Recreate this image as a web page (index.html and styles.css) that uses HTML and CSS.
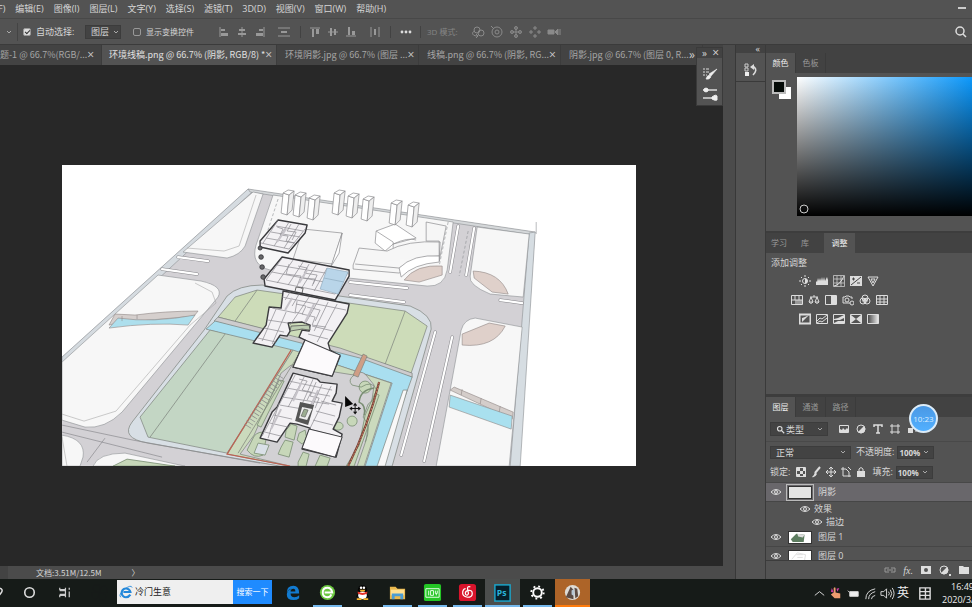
FILE: index.html
```html
<!doctype html>
<html lang="zh-CN">
<head>
<meta charset="UTF-8">
<title>环境线稿.png</title>
<link rel="stylesheet" href="styles.css">
</head>
<body>
<!-- 菜单栏 -->
<nav class="menubar">
  <button>F)</button><button>编辑(E)</button><button>图像(I)</button><button>图层(L)</button><button>文字(Y)</button><button>选择(S)</button><button>滤镜(T)</button><button>3D(D)</button><button>视图(V)</button><button>窗口(W)</button><button>帮助(H)</button>
  <button class="minimize" aria-label="最小化"><svg width="10" height="10" viewBox="0 0 10 10"><path d="M1 3h8v2H1z" fill="#ccc"/></svg></button>
</nav>

<!-- 选项栏 -->
<div class="options">
  <div class="tool"><svg class="chev" viewBox="0 0 8 8"><path d="M2 3l2 2 2-2"/></svg></div>
  <label class="auto"><input type="checkbox" checked>自动选择:</label>
  <span class="drop pick"><select aria-label="自动选择"><option>图层</option></select><svg class="chev" viewBox="0 0 8 8"><path d="M2 3l2 2 2-2"/></svg></span>
  <label class="transform"><input type="checkbox">显示变换控件</label>
  <div class="aligns">
    <button aria-label="左对齐"><svg viewBox="0 0 12 12"><path d="M2 1v10"/><path class="f" d="M3 3h4v2H3zM3 7h7v3H3z"/></svg></button>
    <button aria-label="水平居中"><svg viewBox="0 0 12 12"><path d="M6 1v10"/><path class="f" d="M3 3h6v2H3zM2 7h8v2H2z"/></svg></button>
    <button aria-label="右对齐"><svg viewBox="0 0 12 12"><path d="M10 1v10"/><path class="f" d="M5 3h4v2H5zM2 7h7v3H2z"/></svg></button>
  </div>
  <button class="spread" aria-label="分布"><svg viewBox="0 0 12 12"><path d="M0 2h12M0 10h12"/><path class="f" d="M3 5h6v2H3z"/></svg></button>
  <div class="aligns line">
    <button aria-label="顶对齐"><svg viewBox="0 0 12 12"><path d="M1 2h10"/><path class="f" d="M3 3h2v8H3zM7 3h3v5H7z"/></svg></button>
    <button aria-label="垂直居中"><svg viewBox="0 0 12 12"><path d="M1 6h10"/><path class="f" d="M3 2h2v8H3zM7 3h2v6H7z"/></svg></button>
    <button aria-label="底对齐"><svg viewBox="0 0 12 12"><path d="M1 10h10"/><path class="f" d="M3 1h2v8H3zM7 5h3v4H7z"/></svg></button>
  </div>
  <button class="spread2" aria-label="水平分布"><svg viewBox="0 0 12 12"><path d="M2 1v10M10 1v10"/><path class="f" d="M5 3h2v6H5z"/></svg></button>
  <button class="more line" aria-label="更多"><svg viewBox="0 0 12 12"><circle cx="2" cy="6" r="1.4"/><circle cx="6" cy="6" r="1.4"/><circle cx="10" cy="6" r="1.4"/></svg></button>
  <span class="mode line">3D 模式:</span>
  <div class="modes">
    <svg viewBox="0 0 14 14"><circle cx="6" cy="5" r="3"/><circle cx="10" cy="8" r="3"/><path d="M4 6C0 7 1 11 6 11M5 9l2 2-2 2"/></svg>
    <svg viewBox="0 0 14 14"><circle cx="7" cy="7" r="5"/><circle cx="7" cy="7" r="2"/><path d="M1 1l3 3"/></svg>
    <svg viewBox="0 0 14 14"><path d="M7 2v10M2 7h10"/><circle cx="7" cy="3" r="1.500"/><circle cx="7" cy="11" r="1.500"/><circle cx="3" cy="7" r="1.500"/><circle cx="11" cy="7" r="1.500"/></svg>
    <svg viewBox="0 0 14 14"><path d="M7 1v4M7 9v4M1 7h4M9 7h4M5 3h4M5 11h4M3 5v4M11 5v4"/></svg>
    <svg viewBox="0 0 14 14"><path d="M1 5h6v4H1zM8 7l3-3v6z" fill="#8a8a8a"/><path d="M13 4v6"/></svg>
  </div>
  <button class="search" aria-label="搜索"><svg viewBox="0 0 12 12"><circle cx="5" cy="5" r="4"/><path d="M8 8l3 3"/></svg></button>
</div>

<main class="work">
  <section class="doc">
    <div class="tabs">
      <div class="tab first"><button>题-1 @ 66.7%(RGB/...</button><button class="x" aria-label="关闭">×</button></div>
      <div class="tab on"><button>环境线稿.png @ 66.7% (阴影, RGB/8) *</button><button class="x" aria-label="关闭">×</button></div>
      <div class="tab"><button>环境阴影.jpg @ 66.7% (图层 ...</button><button class="x" aria-label="关闭">×</button></div>
      <div class="tab"><button>线稿.png @ 66.7% (阴影, RG...</button><button class="x" aria-label="关闭">×</button></div>
      <div class="tab"><button>阴影.jpg @ 66.7% (图层 0, R...</button><button class="x" aria-label="更多标签">»</button></div>
    </div>
    <div class="canvas">
      <svg class="art" viewBox="62 165 574 301">
        <rect x="62" y="165" width="574" height="301" fill="#fff"/>
        <!-- 道路底 -->
        <path d="M62 357L248 189 535 232 519 466H62z" fill="#d3d1d5"/>
        <g stroke="#8b8e92" stroke-width=".6">
          <path d="M62 357L248 189l4 3L62 368z" fill="#d5dbe0"/>
          <path d="M248 189l287 43-2 3-283-43z" fill="#d5d8da"/>
          <path d="M529 233l6-1-15 234h-10z" fill="#d6dde2"/>
          <path d="M536 222v12" fill="none"/>
          <!-- 地块 -->
          <g fill="#f7f7f7">
            <path d="M253 192l10 2-18 52Q240 255 227 258L183 252z"/>
            <path d="M273 195l180 27-6 48Q444 287 427 286L270 270Q250 265 256 245z"/>
            <path d="M477 227l52 7-6 63-33-3Q468 285 470 276z"/>
            <path d="M158 275l43 6Q224 286 218 297L122 412Q105 429 85 427L62 420V362z"/>
            <path d="M436 466l25-136Q464 319 475 318l47 9-13 139z"/>
            <path d="M62 435Q86 439 83 457l-3 9H62z"/>
            <path d="M93 466Q98 453 125 453l60 13z"/>
          </g>
          <path d="M256 195L239 246 224 251 187 248M195 283l17 9 4 11-26 22-74 86-32 10-22-7M62 437l5 29" fill="none" stroke="#aaa"/>
          <path d="M278 199l-17 52M448 222l-9 44M468 231l-9 45" fill="none" stroke-dasharray="3 2"/>
        </g>
        <!-- 车道线 -->
        <g stroke="#86868a" stroke-width="3.2" stroke-linecap="round">
          <path d="M178 257l30 4M162 269l35 5M350 282l57 6M350 295l54 7M458 226l-8 46M474 228l-8 47M500 300l22 3M435 332l-34 123M452 337l-28 124"/>
        </g>
        <g stroke="#fff" stroke-width="2.2" stroke-linecap="round">
          <path d="M178 257l30 4M162 269l35 5M350 282l57 6M350 295l54 7M458 226l-8 46M474 228l-8 47M500 300l22 3M435 332l-34 123M452 337l-28 124"/>
        </g>
        <!-- 褐色铺地与水面 -->
        <g stroke="#8e8784" stroke-width=".6">
          <path d="M404 280Q416 264 442 266v9l-23 7z" fill="#dfd0ca"/>
          <path d="M473 271Q500 272 508 294l-16-2-18-14z" fill="#dfd0ca"/>
          <path d="M462 334l27-11 16 3Q494 348 462 345z" fill="#dfd0ca"/>
          <path d="M115 314l20 1q30-4 63-4l-4 5-77 7-8 2z" fill="#d5cfcd"/>
          <path d="M118 318q35 5 77-3l-7 10q-35-3-79 3z" fill="#addfed"/>
          <path d="M450 390l4-3 59 25-1 7z" fill="#d4cdca"/>
          <path d="M450 395l62 21-1 13-62-22z" fill="#a9e0ef"/>
          <path d="M462 389l-1 6M481 398l-1 6M500 406l-1 6M122 316v5M137 315v4"/>
        </g>
        <!-- 中央绿地 -->
        <g stroke="#7b817b" stroke-width=".7">
          <path d="M204 330l23-34Q238 285 262 285l148 21Q433 315 431 329l-39 137H280L148 443Q120 438 132 422z" fill="#d8dfe5"/>
          <path d="M218 317l17-20 22-7 148 21 22 15-16 47-71-24z" fill="#cddcb9"/>
          <path d="M218 317l122 31 72 25v4L214 321z" fill="#cdccce"/>
          <path d="M257 290l-22 31M405 311l-20 53" fill="none"/>
          <path d="M215 321l145 37 52 19-8 22-26 67h-13l27-83-55-18-131-36z" fill="#a9dff0"/>
          <path d="M403 390h4l-22 76h-8z" fill="#f8f8f8"/>
          <path d="M210 330l83 20-66 103-79-16-8-20z" fill="#c3d6c4"/>
          <path d="M225 334l-75 103" fill="none"/>
          <path d="M293 350l98 33-27 83H290l-63-12z" fill="#cbdabd"/>
          <path d="M291 365l63 10q6-6 12 0l8 10-8 55-9 26H290l-50-12 14-19 27-62z" fill="#d2d1d4"/>
          <path d="M363 354l4 2-9 21-5-2z" fill="#cf9e86"/>
        </g>
        <!-- 园区绿化 -->
        <g stroke="#798d72" stroke-width=".8" fill="#c7d7b9">
          <path d="M279 380l5 1-23 46-4-2zM247 450l7-14q5-6 13-3l-4 22q-9 4-16-5zM281 447l4-7 8 2-4 15-11-3zM298 462l5-10 6 2-3 12h-8zM315 466l5-11 10 3-3 8zM286 430l5-6 6 2-3 14-9-3zM299 433l6-3 2 10-5 4-5-4z"/>
          <path d="M359 445l6-30 10-22 4 2-25 71h-8z"/>
          <ellipse cx="338" cy="426" rx="5" ry="4"/><circle cx="352" cy="421" r="5"/><circle cx="365" cy="387" r="6"/>
          <path d="M354 375q-7 5-2 10l9 2q11-7 15 2 1 9-8 15l-5 13q9 10 2 25" fill="none"/>
          <path d="M374 388q-14 2-15 14 7 3 5 13" fill="none" stroke-width="1.5"/>
          <path d="M258 443l11 2-4 10-11-2z" fill="#d9e0e7"/>
          <path d="M113 466l14-7 48 7z"/>
        </g>
        <g fill="none">
          <path d="M291 350l-64 104 63 12" stroke="#bd6252" stroke-width="1.2"/>
          <path d="M300 352l-62 101" stroke="#7b8075" stroke-width=".7"/>
          <path d="M379 382q-11 44-31 84" stroke="#734438" stroke-width="2.2"/>
          <path d="M379 382q-11 44-31 84" stroke="#c57660" stroke-width="1" stroke-dasharray="2 1"/>
          <path d="M280 376l-33 51" stroke="#8b8c8c" stroke-width="8" stroke-dasharray=".7 3"/>
          <path d="M62 425l71 15 127 23M62 432l100 25M105 438l-18 24" stroke="#8b8b8f" stroke-width=".7"/>
        </g>
        <!-- 背景体块 -->
        <g fill="#fff" stroke="#8d8d8f" stroke-width=".7">
          <path d="M303 229l39 4-10 31-39-5z" fill="#f5f5f5"/><path d="M342 233l-3 20-9 15 2-5z"/>
          <path d="M376 231l19-7 21 14-23 6-8 7-10-8zM376 231l17 11v8M393 244q15-7 23-4"/>
          <path d="M426 222l20 4-7 35v-20h-13zM353 265l6-17 28 3q20-11 53-9l-1 19q-28 0-40 12l-46-4zM355 264l44 4q15-13 40-12" fill="#f6f6f6"/>
          <path d="M399 268q14-14 40-12v6q-26 2-38 15z"/>
          <g id="tower"><path d="M283 193l6 2-2 20-6-2z"/><path d="M283 193l5-3 6 1-5 4z"/><path d="M289 195l5-4-2 19-5 5z" fill="#eee"/></g>
          <use href="#tower" x="12" y="2"/><use href="#tower" x="26" y="5"/><use href="#tower" x="51"/><use href="#tower" x="65" y="3"/><use href="#tower" x="80" y="6"/><use href="#tower" x="108" y="10"/><use href="#tower" x="125" y="12"/>
        </g>
        <!-- 主体建筑 -->
        <g fill="#f3f1f4" stroke="#3b3b3e" stroke-width="1.4" stroke-linejoin="round">
          <path d="M278 220l29 5-2 8-17 20-28-6v-6z"/>
          <path d="M282 257l67 13v6l-14 24-70-14-1-7z"/>
          <path d="M283 291l66 13-2 9-19 30 2 7 10 6-8 20-39-9 12-27-6-3 3-7 7 1 1-6-8-3-14 1 2 8-3 5-7-1-8 12-19-4 13-18 3-18 12 1z"/>
          <path d="M293 373l24 6 3 3 17 2-1 9-4 8 10 2-3 14-6 12 9 5-6 23-34-8 8-21-13-4-7-1-13 19-17-4 12-26 5-5z"/>
        </g>
        <g fill="none" stroke="#8b8a8f" stroke-width=".7">
          <path d="M261 243l28 6 16-20M266 238l28 5M271 232l29 5M276 226l27 5M278 220l-15 23M289 222l-15 24M299 224l-15 24M277 227l6 2-3 6 8 1-2 5 9 2M291 224l-4 7 9 1-4 8"/>
          <path d="M266 280l69 14 13-22M282 258l-16 22M293 260l-16 23M303 262l-15 23M316 265l-15 24M327 268l-13 23M272 272l63 12M277 265l60 10M289 264l-3 10 15 2-4 10M309 264l-5 9 13 2-4 9M298 266l9 2-4 10 12 1-3 7"/>
          <path d="M282 297l64 13M290 292l-5 8M299 294l-7 12M309 297l-19 28M319 299l-14 25M328 302l-14 29M337 304l-20 38M272 308l24 5M268 320l20 3M264 328l20 4M258 338l18 4M276 309l-14 32M286 312l-14 32M296 304l10 2-4 8 13 3-3 8 14 2M312 326l21 5M308 334l20 5M307 307l13 3-5 11M297 301l-2 11 8 2"/>
          <path d="M289 381l43 9M287 388l43 8M283 397l46 7M280 405l23 4M274 415l18 4M270 423l18 4M265 432l16 4M295 375l-33 61M304 377l-16 30M313 379l-15 34M322 384l-15 34M331 386l-21 42M299 379l8 2-5 9 9 2-4 8M316 382l-6 14 9 2-4 10M321 401l15 4M316 411l19 5M313 420l20 5M309 429l24 6M279 403l-11 35"/>
        </g>
        <g fill="none" stroke="#c6c3c9" stroke-width="2"><path d="M286 229l-9 13M307 270l-8 13M292 298l-7 12M314 304l-9 18M301 383l-8 18M318 390l-9 19M281 409l-10 20"/></g>
        <path d="M327 268l21 4-10 22-18-5z" fill="#b9d5e9" stroke="#88a4b8" stroke-width=".6"/>
        <path d="M324 278l20 4" stroke="#88a4b8" stroke-width=".6"/>
        <path d="M305 340l35 15-8 21-39-9zM309 429l33 8-7 20-33-9z" fill="#fcfafc" stroke="#3f3f42"/>
        <path d="M300 402l14 3-6 20-13-4z" fill="#555"/><path d="M302 407l10 2-5 11-8-2z" fill="#eee"/><path d="M304 409l4 1-3 7-4-1z" fill="#9cad91" stroke="#555" stroke-width=".6"/>
        <path d="M291 326l18-1 1 5-8-1-12 2z" fill="#bdcdb1" stroke="#555" stroke-width=".8"/>
        <path d="M295 291l1-4 7 1-1 5" fill="none" stroke="#444" stroke-width=".8"/>
        <g fill="#68686a" stroke="#303033" stroke-width=".8"><circle cx="260" cy="248" r="2"/><circle cx="261" cy="257" r="2.3"/><circle cx="262" cy="267" r="2.3"/><circle cx="263" cy="277" r="2.3"/></g>
        <!-- 移动工具光标 -->
        <path d="M345 396l8 8-8 3z" fill="#050505"/>
        <path d="M355 404v9M350.500 408.500h9M353.500 405.500l1.500-2 1.500 2M353.500 411.500l1.500 2 1.500-2M352 407l-2 1.500 2 1.500M358 407l2 1.500-2 1.500" fill="none" stroke="#111" stroke-width="1"/>
      </svg>
    </div>
    <div class="status"><span class="size">文档:3.51M/12.5M</span><span>〉</span></div>
    <!-- 浮动小面板 -->
    <aside class="float">
      <header><span>»</span><button aria-label="关闭">×</button></header>
      <button aria-label="画笔设置"><svg viewBox="0 0 16 16"><path d="M1 3h2M4 3h3M1 6h2M4 6h3M1 9h2M4 9h1" stroke="#ddd"/><path d="M15 3l-6 7-2-2zM4 13q1-4 4-4l1 2q-2 3-5 2z" fill="#eee" stroke="#eee" stroke-width=".6"/></svg></button>
      <button aria-label="画笔"><svg viewBox="0 0 16 16"><path d="M1 4h14M1 12h10" stroke="#ddd" stroke-width="1.500"/><path d="M2 3q2-2 4 0v2q-2 2-4 0zM10 11q4-3 5-1v4q-2 1-5-1z" fill="#eee" stroke="#eee"/></svg></button>
    </aside>
  </section>

  <div class="dock">
    <header>«</header>
    <button aria-label="历史记录"><svg viewBox="0 0 16 16"><path d="M2 2h3v3H2zM2 6h3v3H2z" fill="none" stroke="#ccc"/><path d="M2 10h4v4H2z" fill="#eee"/><path d="M9 5h2q4 3-1 8" fill="none" stroke="#ddd" stroke-width="1.600"/><path d="M7 5l4-3v6z" fill="#ddd"/></svg></button>
  </div>

  <aside class="panels">
    <div class="strip"></div>
    <section class="panel">
      <div class="ptabs"><button class="on">颜色</button><button>色板</button></div>
      <div class="color">
        <div class="swatch"><i class="back"></i><i class="fore"></i></div>
        <div class="field"><svg viewBox="0 0 12 12"><circle cx="6" cy="6" r="4" fill="none" stroke="#ccc"/></svg></div>
      </div>
    </section>
    <section class="panel adjust">
      <div class="ptabs"><button>学习</button><button>库</button><button class="on">调整</button></div>
      <h2>添加调整</h2>
      <div class="icons">
        <svg viewBox="0 0 12 12"><circle cx="6" cy="6" r="2.500"/><path class="f" d="M6 3.500a2.500 2.500 0 010 5z"/><path d="M6 0v2M6 10v2M0 6h2M10 6h2M2 2l1 1M9 9l1 1M2 10l1-1M9 3l1-1"/></svg>
        <svg viewBox="0 0 12 12"><path class="f" d="M0 10V6l1 1 1-4 1 3 1-3 1 3 1-4 1 4 1-4 1 4 2-4 1 3v5z"/></svg>
        <svg viewBox="0 0 12 12"><path d="M.5.500h11v11H.5zM4 1v10M8 1v10M1 4h10M1 8h10" opacity=".7"/><path d="M1 11Q7 10 11 1"/></svg>
        <svg viewBox="0 0 12 12"><path class="f" d="M0 1h12v10H0z"/><path d="M11 2L1 10M2 4h3M3.500 2.500v3M7 8h3" stroke="#444"/></svg>
        <svg viewBox="0 0 12 12"><path d="M1 2h10L6 11z"/><path d="M4 4h4L6 8z"/></svg>
      </div>
      <div class="icons">
        <svg viewBox="0 0 12 12"><path d="M.5 1.500h11v9H.5zM1 6h10M4 2v4M8 2v4"/><path class="f" d="M4 6h7v4H4z" opacity=".5"/></svg>
        <svg viewBox="0 0 12 12"><path d="M6 1v2M2 3h8M3 3L1 8h4zM9 3L7 8h4zM1 8q2 3 4 0M7 8q2 3 4 0"/></svg>
        <svg viewBox="0 0 12 12"><path d="M.5 1.500h11v9H.5z"/><path class="f" d="M6 2h5v8H6z"/></svg>
        <svg viewBox="0 0 12 12"><path d="M8 9H1V3h2l1-1h3l1 1h2v2"/><circle cx="5" cy="6" r="2"/><circle cx="10" cy="9" r="2"/></svg>
        <svg viewBox="0 0 12 12"><circle cx="6" cy="4" r="3"/><circle cx="4" cy="7" r="3"/><circle cx="8" cy="7" r="3"/><path class="f" d="M4 4h4l1 3-3 3-3-3z" opacity=".7"/></svg>
        <svg viewBox="0 0 12 12"><path d="M.5 1.500h11v9H.5zM4 2v8M8 2v8M1 5h10M1 8h10"/></svg>
      </div>
      <div class="icons">
        <svg viewBox="0 0 12 12"><path d="M.5 1.500h11v9H.5z" stroke-width="2"/><path class="f" d="M10 2L3 9V5l3-1z"/></svg>
        <svg viewBox="0 0 12 12"><path d="M.5 1.500h11v9H.5zM1 8l3-3 2 1 5-4M1 10l3-2 2 1 5-4"/></svg>
        <svg viewBox="0 0 12 12"><path d="M.5 1.500h11v9H.5z"/><path class="f" d="M1 6l4-1 6-3v3L7 7H1zM1 10l4-2h6v2z"/></svg>
        <svg viewBox="0 0 12 12"><path d="M.5 1.500h11v9H.5z"/><path class="f" d="M1 2l5 4 5-4v8L6 6l-5 4z"/></svg>
        <svg viewBox="0 0 12 12"><defs><linearGradient id="fade"><stop stop-color="#444"/><stop offset="1" stop-color="#eee"/></linearGradient></defs><path d="M.5 1.500h11v9H.5z" fill="url(#fade)"/></svg>
      </div>
    </section>
    <section class="panel layers">
      <div class="ptabs"><button class="on">图层</button><button>通道</button><button>路径</button></div>
      <div class="row filter">
        <span class="drop kind"><svg class="mag" viewBox="0 0 12 12"><circle cx="5" cy="5" r="3"/><path d="M7 7l4 4"/></svg><select aria-label="筛选"><option>类型</option></select><svg class="chev" viewBox="0 0 8 8"><path d="M2 3l2 2 2-2"/></svg></span>
        <span class="icons">
          <svg viewBox="0 0 12 12"><path d="M1.500 2.500h9v7h-9z"/><path class="f" d="M2 9V6l2 1 1-2 2 2 2-2 1 1v3z"/></svg>
          <svg viewBox="0 0 12 12"><circle cx="6" cy="6" r="4"/><path class="f" d="M9 3a4 4 0 01-6 6z"/></svg>
          <svg viewBox="0 0 12 12"><path d="M2 4V2h8v2M6 2v8M4 10h4" stroke-width="1.500"/></svg>
          <svg viewBox="0 0 12 12"><path d="M3 1v10M9 1v10M1 3h10M1 9h10"/></svg>
          <svg viewBox="0 0 12 12"><path d="M5 2h5v7"/><path class="f" d="M2 5h5v5H2z"/></svg>
        </span>
      </div>
      <div class="row">
        <span class="drop blend"><select aria-label="混合模式"><option>正常</option></select><svg class="chev" viewBox="0 0 8 8"><path d="M2 3l2 2 2-2"/></svg></span>
        <label for="op">不透明度:</label>
        <span class="drop num"><input id="op" type="text" value="100%"><svg class="chev" viewBox="0 0 8 8"><path d="M2 3l2 2 2-2"/></svg></span>
      </div>
      <div class="row">
        <span>锁定:</span>
        <span class="locks">
          <svg viewBox="0 0 12 12"><path d="M1.500 1.500h9v9h-9z"/><path class="f" d="M2 2h3v3H2zM8 2h3v3H8zM5 5h3v3H5zM2 8h3v3H2zM8 8h3v3H8z"/></svg>
          <svg viewBox="0 0 12 12"><path d="M10 1L5 7" stroke-width="2"/><path class="f" d="M5 6l2 2q-2 4-5 3 2-1 3-5z"/></svg>
          <svg viewBox="0 0 12 12"><path d="M6 1v10M1 6h10M4 3l2-2 2 2M4 9l2 2 2-2M3 4L1 6l2 2M9 4l2 2-2 2"/></svg>
          <svg viewBox="0 0 12 12"><path d="M3 1v9h8M1 3h5l3 3v5M8 1l3 3"/></svg>
          <svg viewBox="0 0 12 12"><path d="M4 5V3q2-3 4 0v2"/><path class="f" d="M2 5h8v6H2z"/></svg>
        </span>
        <label for="fill">填充:</label>
        <span class="drop num"><input id="fill" type="text" value="100%"><svg class="chev" viewBox="0 0 8 8"><path d="M2 3l2 2 2-2"/></svg></span>
      </div>
      <div class="list">
        <div class="layer sel"><svg class="eye" viewBox="0 0 12 12"><path d="M1 6q5-5 10 0-5 5-10 0z"/><circle cx="6" cy="6" r="1.500"/></svg><i class="thumb check"></i>阴影</div>
        <div class="fx"><svg class="eye" viewBox="0 0 12 12"><path d="M1 6q5-5 10 0-5 5-10 0z"/><circle cx="6" cy="6" r="1.500"/></svg>效果</div>
        <div class="fx sub"><svg class="eye" viewBox="0 0 12 12"><path d="M1 6q5-5 10 0-5 5-10 0z"/><circle cx="6" cy="6" r="1.500"/></svg>描边</div>
        <div class="layer"><svg class="eye" viewBox="0 0 12 12"><path d="M1 6q5-5 10 0-5 5-10 0z"/><circle cx="6" cy="6" r="1.500"/></svg><i class="thumb"><svg viewBox="0 0 22 12"><path d="M1 8l6-6 9 1-1 8H3z" fill="#5d7d60"/><path d="M8 2l8 1-2 3-5-1z" fill="#ddd"/></svg></i>图层 1</div>
        <div class="layer"><svg class="eye" viewBox="0 0 12 12"><path d="M1 6q5-5 10 0-5 5-10 0z"/><circle cx="6" cy="6" r="1.500"/></svg><i class="thumb"><svg viewBox="0 0 22 12"><path d="M2 9l6-7 9 2-1 6M7 4h7M8 7h6" fill="none" stroke="#ddd"/></svg></i>图层 0</div>
      </div>
      <footer class="foot">
        <button aria-label="链接图层"><svg viewBox="0 0 12 12" opacity=".5"><path d="M5 4H1v4h4M7 4h4v4H7M3 6h6"/></svg></button>
        <button aria-label="图层样式" class="fxb">fx.</button>
        <button aria-label="蒙版"><svg viewBox="0 0 12 12"><path class="f" fill-rule="evenodd" d="M1 2h10v8H1zM6 4a2 2 0 100 4 2 2 0 000-4z"/></svg></button>
        <button aria-label="调整图层"><svg viewBox="0 0 12 12"><circle cx="5" cy="6" r="4"/><path class="f" d="M8 3a4 4 0 01-6 6zM10 10h2v2h-2z"/></svg></button>
        <button aria-label="新建组"><svg viewBox="0 0 12 12"><path class="f" d="M1 2h4l1 1h5v7H1z"/></svg></button>
      </footer>
      <div class="bubble">10:23</div>
    </section>
  </aside>
</main>

<!-- 任务栏 -->
<footer class="taskbar">
  <div class="start"><svg viewBox="0 0 12 20"><path d="M-1 5q5 1 2 5l-3 4" fill="none" stroke="#ddd" stroke-width="1.500"/></svg></div>
  <button class="app" aria-label="Cortana"><svg viewBox="0 0 20 20"><circle cx="10" cy="10" r="5" fill="none" stroke="#ddd" stroke-width="1.700"/></svg></button>
  <button class="app" aria-label="任务视图"><svg viewBox="0 0 20 20"><path d="M5 5v2h6V5M5 15v-2h6v2M5 8h6v4H5M15 5v2M15 9v6" fill="none" stroke="#ccc" stroke-width="1.300"/></svg></button>
  <button class="app" aria-label="风车"><svg viewBox="0 0 20 20" fill="#eee" stroke="#161b19" stroke-width=".8"><g id="petal"><path d="M10 10V2q-6-1-7 3 0 4 7 5z"/></g><use href="#petal" transform="rotate(90 10 10)"/><use href="#petal" transform="rotate(180 10 10)"/><use href="#petal" transform="rotate(270 10 10)"/></svg></button>
  <form class="seek">
    <svg viewBox="0 0 16 16"><path d="M13 11q-2 3-5 3a5 5 0 115-6H5" fill="none" stroke="#2488da" stroke-width="2.500"/><path d="M2 14Q-1 11 6 5q8-6 9-2" fill="none" stroke="#2488da"/></svg>
    <input type="text" value="冷门生意" aria-label="搜索词"><button type="button">搜索一下</button>
  </form>
  <div class="apps">
    <button class="app" aria-label="Edge"><svg viewBox="0 0 20 20"><path d="M4 10q0-7 7-7 6 0 6 8H8q0 4 4 4 3 0 5-2v3q-2 2-6 2-7 0-7-6 0-4 5-6-3 0-5 4zM8 9h5q0-3-2-3-3 0-3 3z" fill="#127bd0" fill-rule="evenodd"/></svg></button>
    <button class="app run" aria-label="浏览器"><svg viewBox="0 0 20 20"><circle cx="10" cy="10" r="8" fill="#6bc73f"/><path d="M14 12q-1 3-4 3-5 0-5-5t5-5q4 0 5 5H7" fill="none" stroke="#fff" stroke-width="2"/></svg></button>
    <button class="app" aria-label="QQ"><svg viewBox="0 0 20 20"><ellipse cx="10" cy="8" rx="5" ry="6" fill="#050505"/><path d="M6 9l-3 6 4-2M14 9l3 6-4-2" fill="#050505"/><ellipse cx="10" cy="13" rx="4.500" ry="4" fill="#fff"/><path d="M5 9q5 3 10 0v2q-5 3-10 0z" fill="#e63126"/><circle cx="8.500" cy="5" r="1.300" fill="#fff"/><circle cx="11.500" cy="5" r="1.300" fill="#fff"/><path d="M7 7h6l-1 2H8zM4 16h5v2H4zM11 16h5v2h-5z" fill="#f6b42c"/></svg></button>
    <button class="app run" aria-label="文件"><svg viewBox="0 0 20 20"><path d="M2 4h6l2 2h8v11H2z" fill="#eab84d"/><path d="M3 7h14v6H3z" fill="#ffe092"/><path d="M4 11h12v6h-3v-3H7v3H4z" fill="#4c9dd3"/></svg></button>
    <button class="app run" aria-label="爱奇艺"><svg viewBox="0 0 20 20"><rect x="1" y="1" width="18" height="18" rx="2" fill="#24c625"/><path d="M3 6h14v9H3zM6 8v5M8 8h3v5H8zM13 8v3h2V8M14 11v2" fill="none" stroke="#eaffea"/></svg></button>
    <button class="app run" aria-label="音乐"><svg viewBox="0 0 20 20"><rect x="1" y="1" width="18" height="18" rx="3" fill="#d9142c"/><path d="M13 4q-3-1-3 2l1 5q-1 3-3 1-1-3 2-4 5-1 5 3 0 4-5 4-6-1-5-6 1-3 3-3" fill="none" stroke="#fff" stroke-width="1.300"/></svg></button>
    <button class="app run now" aria-label="Photoshop"><svg viewBox="0 0 20 20"><rect x="2" y="2" width="16" height="17" fill="#071f2b" stroke="#1ca8cf" stroke-width="1.500"/><text x="4" y="14" class="ps">Ps</text></svg></button>
    <button class="app run" aria-label="设置"><svg viewBox="0 0 20 20"><circle cx="10" cy="10" r="4.500" fill="none" stroke="#fff" stroke-width="2"/><circle cx="10" cy="10" r="6.500" fill="none" stroke="#fff" stroke-width="2" stroke-dasharray="2 3.100"/></svg></button>
    <button class="app run hot" aria-label="头像"><svg viewBox="0 0 20 20"><circle cx="10" cy="10" r="8" fill="#dedbd5"/><path d="M3 15l5-11 3 3v10zM12 5l3 1 1 8-3 2z" fill="#5c4b43"/><path d="M9 8l3-2v8l-3-2z" fill="#b7c7d4"/></svg></button>
  </div>
  <div class="tray">
    <svg viewBox="0 0 16 16"><path d="M3 10l5-4 5 4"/></svg>
    <svg viewBox="0 0 16 16"><path d="M5 7V2q2-2 2 1v4l5 1v5H6l-4-4z" fill="#ef9d70" stroke="none"/><path d="M3 2l2 5-3-1zM8 3l3-1-2 4z" fill="#d13ca4" stroke="none"/></svg>
    <svg viewBox="0 0 16 16"><path d="M4 6h9v5H4zM2 5l2 2" fill="#eee"/></svg>
    <svg viewBox="0 0 16 16"><path d="M3 14Q3 5 13 3M6 14q0-6 7-8M9 14q0-3 4-4"/></svg>
    <svg viewBox="0 0 16 16"><path d="M1 6h3l3-3v10l-3-3H1zM9 6q2 2 0 4M11 4q3 4 0 8M13 2q4 6 0 12"/></svg>
    <span class="ime">英</span>
    <svg viewBox="0 0 16 16" class="grid"><path d="M3 2h11v12H3zM3 6h11M3 10h11M9 2v12" stroke-width="1.500"/></svg>
    <div class="clock"><time>16:49</time><time>2020/3/</time></div>
  </div>
</footer>
</body>
</html>
```

FILE: styles.css
```css
*{box-sizing:border-box;}
body{
	margin:0; height:100vh;
	display:flex; flex-direction:column;
	overflow:hidden;
	background:#535353;
	color:#d6d6d6;
	font:9px/12px "Open Sans","Noto Sans CJK SC",sans-serif;
}
button,input,select{
	margin:0; padding:0; border:0;
	background:none; color:inherit; font:inherit;
	border-radius:0; outline:0;
}
select{appearance:none; width:100%;}
button{white-space:nowrap;}
svg{display:block; flex:none; fill:none;}
.chev{width:8px; height:8px; stroke:#aaa;}

/* 菜单栏 */
.menubar{
	display:flex; align-items:center; gap:10px;
	height:18px; margin-left:-2px;
}
.minimize{margin-left:auto; padding-right:5px;}

/* 选项栏 */
.options{
	display:flex; align-items:center;
	height:27px;
	border-top:1px solid #484848;
	border-bottom:1px solid #3b3b3b;
}
.options svg:not(.chev){width:12px; height:12px; stroke:#999; fill:none;}
.options .aligns .f,.options button .f{fill:#999; stroke:none;}
.tool{width:18px; height:18px; padding:5px; border-right:1px solid #444;}
.options label{display:flex; align-items:center; gap:5px;}
.options input{
	appearance:none; width:8px; height:8px;
	border:1px solid #999; border-radius:2px;
}
.options input:checked{background:#ddd;}
.options input:checked::after{
	content:""; display:block;
	width:2px; height:4px; margin:0 auto;
	border:solid #333; border-width:0 1px 1px 0;
	rotate:45deg;
}
.auto{width:62px; padding-left:5px; white-space:nowrap;}
.drop{
	display:flex; align-items:center;
	height:13px; padding:0 3px 0 5px;
	background:#434343;
	border:1px solid #3c3c3c;
}
.drop select,.drop input{flex:1; min-width:0; height:11px; line-height:11px;}
.pick{width:36px; height:14px; margin-left:5px; padding-right:0;}
.transform{width:85px; margin-left:12px; font-size:8px; white-space:nowrap;}
.aligns{display:flex; gap:6px;}
.spread{margin-left:12px;}
.line{border-left:1px solid #424242;}
.spread + .aligns{margin-left:10px; padding-left:8px;}
.spread2{margin-left:12px;}
.more{margin-left:9px; padding-left:9px;}
.options .more svg{fill:#ddd; stroke:none;}
.mode{margin-left:8px; padding-left:6px; color:#858585; font-size:8px;}
.modes{display:flex; gap:5px; margin-left:13px;}
.options .modes svg{width:14px; height:14px; stroke:#8a8a8a;}
.search{margin-left:auto; padding-right:5px;}
.options .search svg{stroke:#ddd; stroke-width:1.5;}

.work{flex:1; min-height:0; display:flex;}

/* 文档区 */
.doc{
	position:relative;
	flex:1; min-width:0;
	display:flex; flex-direction:column;
	border-right:1px solid #383838;
	padding-right:12px;
	background:#4b4b4b;
}
.tabs{
	display:flex; height:20px;
	background:#434343;
	font-family:"Noto Sans CJK SC",sans-serif;
	overflow:hidden;
}
.tab{
	display:flex; align-items:center; justify-content:space-between;
	flex:0 0 142px; padding:0 7px 0 8px;
	border-right:1px solid #3c3c3c;
	color:#a5a5a5;
	overflow:hidden;
}
.tab.first{flex-basis:102px; padding-left:0;}
.tab.on{flex-basis:175px; padding-left:7px; background:#535353; color:#e0e0e0;}
.x{font:12px/12px "Open Sans",sans-serif; color:#ccc;}
.canvas{
	flex:1; min-height:0;
	display:flex; align-items:center;
	background:#282828;
	padding:0 12% 0 62px;
}
.art{flex:1; min-width:0;}
.status{
	display:flex; align-items:center; gap:30px;
	height:13px; padding-left:8px;
	border-left:8px solid #434343;
	font:8px/12px "Noto Sans CJK SC",sans-serif;
}
.size{padding-left:20px;}
.float{
	position:absolute; top:2px; right:12px;
	width:27px; height:59px;
	background:#535353;
	border:1px solid #3a3a3a;
}
.float header{
	display:flex; justify-content:space-between; align-items:center;
	height:10px; padding:0 3px 0 5px;
	background:#424242;
	font-size:10px;
}
.float header button{font-size:12px; line-height:10px;}
.float > button{display:block; padding:8px 0 0 5px;}
.float > button + button{padding-top:4px;}
.float svg{width:16px; height:16px;}

.dock{width:29px;}
.dock header{
	height:8px; padding-right:5px;
	background:#424242;
	text-align:right; line-height:7px;
}
.dock button{
	display:block; width:100%; height:29px;
	padding:5px 0 0 7px;
	border-bottom:1px solid #3a3a3a;
}
.dock svg{width:16px; height:16px;}

/* 右侧面板 */
.panels{
	width:207px;
	display:flex; flex-direction:column;
	border-left:1px solid #3a3a3a;
}
.strip{height:8px; background:#424242;}
.ptabs{display:flex; height:20px; background:#424242;}
.ptabs button{width:30px; color:#999; font-size:8px; border-right:1px solid #3b3b3b;}
.ptabs .on{background:#535353; color:#eee;}
.color{display:flex; padding:4px 0 15px 5px;}
.swatch{position:relative; width:26px;}
.swatch i{position:absolute; width:14px; height:14px;}
.swatch .fore{left:1px; top:3px; background:#050b08; border:2px solid #bbb;}
.swatch .back{left:8px; top:10px; width:12px; height:12px; background:#fff;}
.field{
	display:flex; align-items:flex-end;
	flex:1; height:139px; padding:1px;
	background:linear-gradient(to top,#000,transparent),linear-gradient(to right,#fff,#0c98fb);
}
.field svg{width:12px; height:12px;}
.adjust{flex:1; border-top:2px solid #3d3d3d;}
.adjust .ptabs button{width:26px; border:0;}
.adjust .ptabs .on{width:31px; margin-left:6px;}
.adjust h2{margin:0; padding:4px 5px 2px; font-size:9px; font-weight:normal; line-height:12px;}
.adjust .icons{height:19px; padding-left:25px;}
.adjust .icons + .icons + .icons{padding-left:33px;}
.adjust h2 + .icons{padding-left:33px;}
.icons{display:flex; align-items:center; gap:5px;}
.icons svg,.locks svg,.foot svg,.eye{width:12px; height:12px; stroke:#ddd;}
.panels .f{fill:#ddd; stroke:none;}
.layers{position:relative; border-top:3px solid #3d3d3d;}
.row{display:flex; align-items:center; height:20px; padding-left:4px;}
.row label{margin-left:5px;}
.filter{height:25px; border-bottom:1px solid #494949;}
.kind{width:58px; height:14px;}
.mag{width:9px; height:9px; margin-right:1px; stroke:#ddd; stroke-width:1.5;}
.filter .icons{margin-left:10px;}
.blend{width:81px;}
.num{width:37px; margin-left:3px; padding-left:1px; font-size:8px; font-weight:bold;}
.locks{display:flex; gap:3px; margin-left:5px;}
.list{height:78px; overflow:hidden; border-top:1px solid #484848;}
.layer{
	display:flex; align-items:center;
	height:19px; padding-left:4px;
	border-bottom:1px solid #464646;
}
.layer.sel{background:#69676b;}
.thumb{width:24px; height:13px; margin:0 6px; background:#fff; border:1px solid #333;}
.thumb svg{width:22px; height:11px;}
.check{background:#e4e4e4; outline:1px solid #bbb; outline-offset:1px;}
.fx{display:flex; align-items:center; gap:3px; height:13px; padding-left:33px;}
.sub{padding-left:45px;}
.foot{
	display:flex; align-items:center; justify-content:flex-end; gap:7px;
	height:19px; padding-right:2px;
	border-top:1px solid #3c3c3c;
}
.fxb{font:italic 10px "Liberation Serif",serif;}
.bubble{
	position:absolute; left:143px; top:7px;
	width:29px; height:29px;
	border:2px solid #dcecf8; border-radius:50%;
	background:linear-gradient(#4a98e4,#52b0ff);
	color:#d9edff;
	font-size:8px; line-height:25px; text-align:center;
}

/* 任务栏 */
.taskbar{
	display:flex;
	height:28px;
	background:#161b18;
}
.start{width:12px; padding-top:4px;}
.start svg{width:12px; height:20px;}
.app{
	display:flex; align-items:center; justify-content:center;
	width:35px; height:28px;
	border-bottom:2px solid transparent;
}
.app svg{width:19px; height:19px;}
.run{
	background:linear-gradient(#76b9ed,#76b9ed) bottom/29px 2px no-repeat border-box;
}
.now{background-color:#4b4e4d; background-size:35px 2px;}
.hot{background:#ad6428; border-bottom-color:#ff7b0c;}
.ps{fill:#2ab6dc; font:bold 9px "Open Sans",sans-serif;}
.seek{
	display:flex; align-items:center;
	width:155px; height:24px; margin-top:1px;
	background:#efefef;
}
.seek svg{width:14px; height:14px; margin:0 2px;}
.seek input{flex:1; min-width:0; color:#222;}
.seek button{width:39px; height:24px; background:#1f8bff; color:#fff; font-size:8px;}
.apps{display:flex; padding-left:3px;}
.tray{
	display:flex; align-items:center; gap:2px;
	margin-left:auto;
	color:#eee;
}
.tray svg{width:15px; height:15px; stroke:#ddd;}
.ime{width:14px; font-size:12px;}
.tray .grid{margin-left:4px;}
.clock{width:38px; padding-left:8px; overflow:hidden; white-space:nowrap;}
.clock time{display:block; line-height:13px;}
.clock time:first-child{padding-left:9px;}
```
